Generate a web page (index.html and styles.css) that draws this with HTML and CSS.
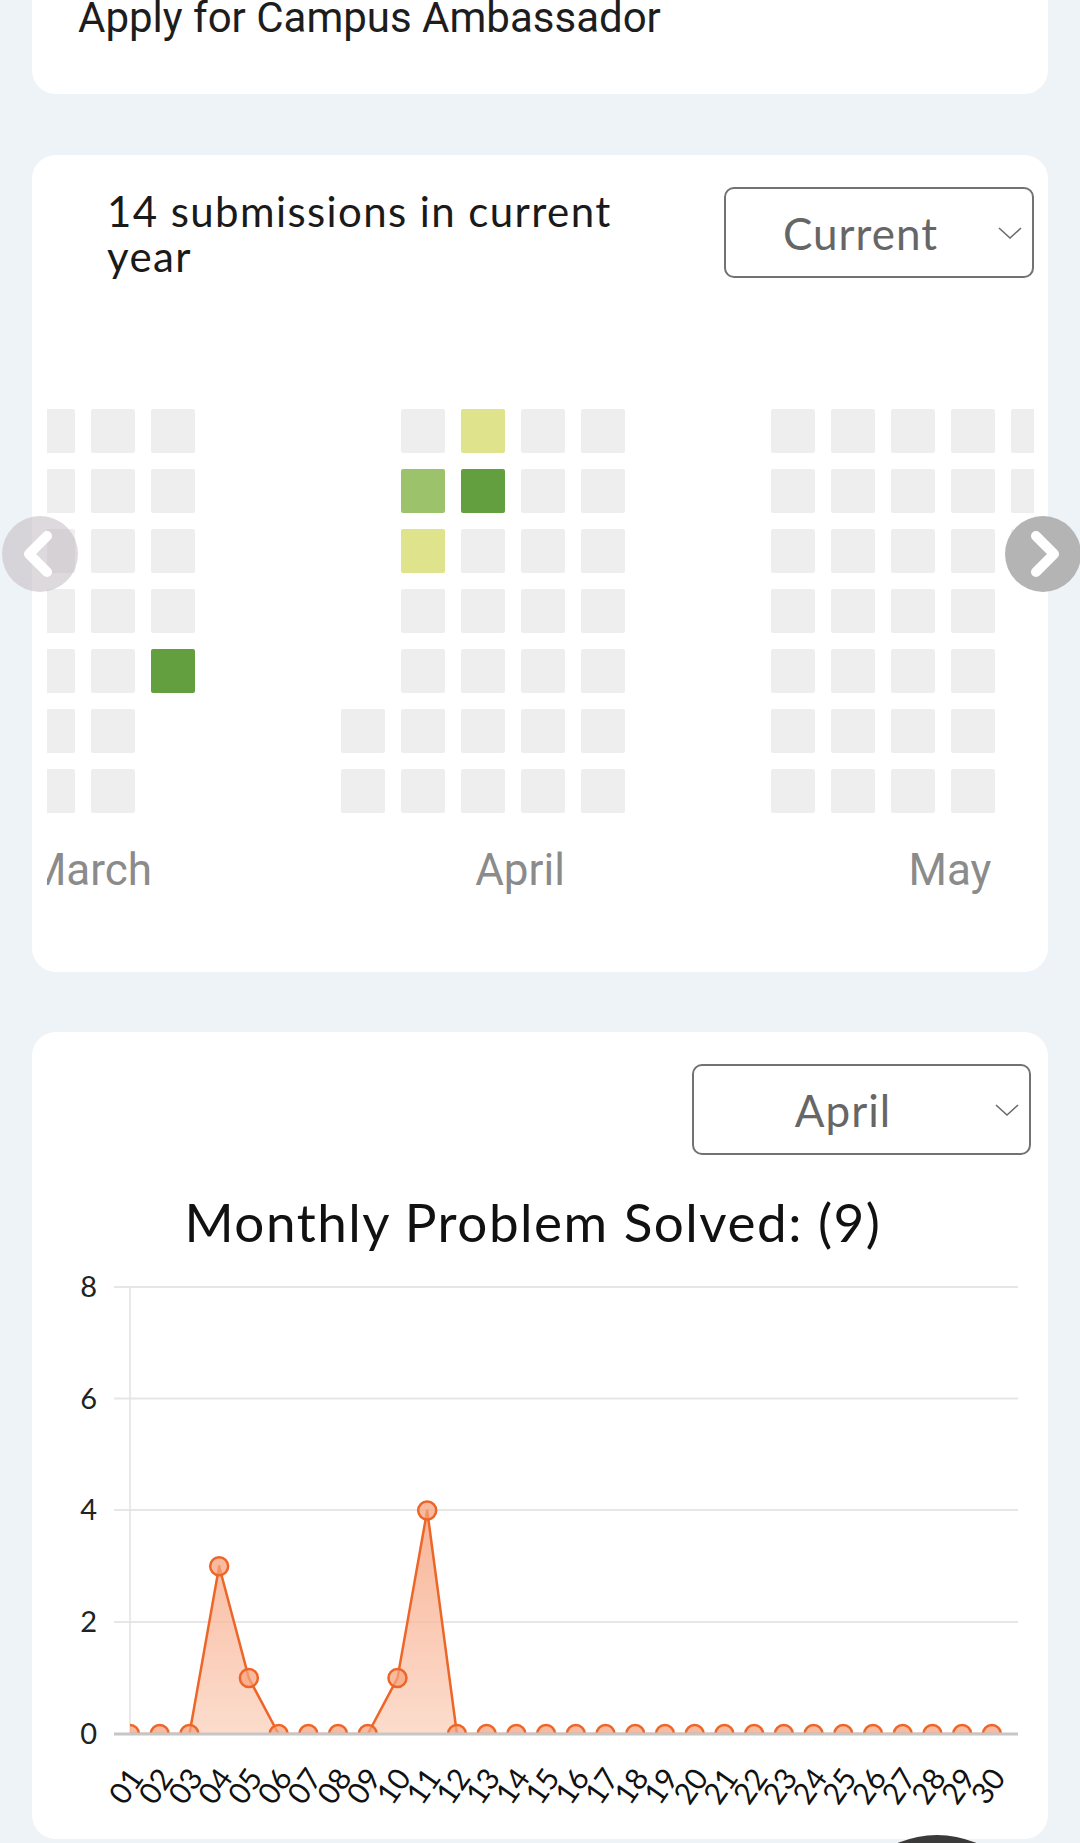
FILE: index.html
```html
<!DOCTYPE html>
<html lang="en">
<head>
<meta charset="utf-8">
<title>Profile stats</title>
<link rel="stylesheet" href="styles.css">
</head>
<body>
<div class="page">

  <section class="card card-apply">
    <div class="apply-text">Apply for Campus Ambassador</div>
  </section>

  <section class="card card-heat">
    <div class="heat-header">
      <div class="heat-title">14 submissions in current year</div>
      <div class="select select-year">
        <span class="select-label">Current</span>
        <svg class="chev" viewBox="0 0 26 14" width="26" height="14"><path d="M2 2 L13 12 L24 2" /></svg>
      </div>
    </div>

    <div class="heat-viewport">
      <div class="heat-track">
        <div class="month">
          <div class="month-grid">
            <span class="c e"></span><span class="c e"></span>
            <span class="c"></span><span class="c"></span><span class="c"></span><span class="c"></span><span class="c"></span>
            <span class="c"></span><span class="c"></span><span class="c"></span><span class="c"></span><span class="c"></span><span class="c"></span><span class="c"></span>
            <span class="c"></span><span class="c"></span><span class="c"></span><span class="c"></span><span class="c"></span><span class="c"></span><span class="c"></span>
            <span class="c"></span><span class="c"></span><span class="c"></span><span class="c"></span><span class="c"></span><span class="c"></span><span class="c"></span>
            <span class="c"></span><span class="c"></span><span class="c"></span><span class="c"></span><span class="c l3"></span>
          </div>
          <div class="month-label">March</div>
        </div>
        <div class="month">
          <div class="month-grid">
            <span class="c e"></span><span class="c e"></span><span class="c e"></span><span class="c e"></span><span class="c e"></span>
            <span class="c"></span><span class="c"></span>
            <span class="c"></span><span class="c l2"></span><span class="c l1"></span><span class="c"></span><span class="c"></span><span class="c"></span><span class="c"></span>
            <span class="c l1"></span><span class="c l3"></span><span class="c"></span><span class="c"></span><span class="c"></span><span class="c"></span><span class="c"></span>
            <span class="c"></span><span class="c"></span><span class="c"></span><span class="c"></span><span class="c"></span><span class="c"></span><span class="c"></span>
            <span class="c"></span><span class="c"></span><span class="c"></span><span class="c"></span><span class="c"></span><span class="c"></span><span class="c"></span>
          </div>
          <div class="month-label">April</div>
        </div>
        <div class="month">
          <div class="month-grid">
            <span class="c"></span><span class="c"></span><span class="c"></span><span class="c"></span><span class="c"></span><span class="c"></span><span class="c"></span>
            <span class="c"></span><span class="c"></span><span class="c"></span><span class="c"></span><span class="c"></span><span class="c"></span><span class="c"></span>
            <span class="c"></span><span class="c"></span><span class="c"></span><span class="c"></span><span class="c"></span><span class="c"></span><span class="c"></span>
            <span class="c"></span><span class="c"></span><span class="c"></span><span class="c"></span><span class="c"></span><span class="c"></span><span class="c"></span>
            <span class="c"></span><span class="c"></span><span class="c"></span>
          </div>
          <div class="month-label">May</div>
        </div>
      </div>
    </div>

    <button class="nav nav-prev" aria-label="Previous">
      <svg viewBox="0 0 76 76" width="76" height="76"><path d="M45 20 L27 38 L45 56" /></svg>
    </button>
    <button class="nav nav-next" aria-label="Next">
      <svg viewBox="0 0 76 76" width="76" height="76"><path d="M31 20 L49 38 L31 56" /></svg>
    </button>
  </section>

  <section class="card card-chart">
    <div class="chart-head">
      <div class="select select-month">
        <span class="select-label">April</span>
        <svg class="chev" viewBox="0 0 26 14" width="26" height="14"><path d="M2 2 L13 12 L24 2" /></svg>
      </div>
    </div>
    <div class="chart-title">Monthly Problem Solved: (9)</div>

    <svg class="chart" viewBox="32 1253 1016 585" width="1016" height="585">
      <defs>
        <linearGradient id="fillGrad" gradientUnits="userSpaceOnUse" x1="0" y1="1509" x2="0" y2="1733">
          <stop offset="0" stop-color="#f6a27d" stop-opacity="0.8"/>
          <stop offset="1" stop-color="#fbcdb7" stop-opacity="0.7"/>
        </linearGradient>
        <clipPath id="area">
          <rect x="130" y="1260" width="890" height="473"/>
        </clipPath>
      </defs>

      <g class="grid">
        <line x1="114" y1="1286" x2="1018" y2="1286"/>
        <line x1="114" y1="1397.5" x2="1018" y2="1397.5"/>
        <line x1="114" y1="1509" x2="1018" y2="1509"/>
        <line x1="114" y1="1621" x2="1018" y2="1621"/>
        <line class="yaxis" x1="130" y1="1286" x2="130" y2="1733"/>
      </g>

      <g class="ylabels">
        <text x="97" y="1296">8</text>
        <text x="97" y="1407.5">6</text>
        <text x="97" y="1519">4</text>
        <text x="97" y="1631">2</text>
        <text x="97" y="1743">0</text>
      </g>

      <g clip-path="url(#area)">
        <path class="area" d="M130 1733 L159.72 1733 L189.44 1733 L219.16 1565.3 L248.88 1677.1 L278.6 1733 L308.32 1733 L338.04 1733 L367.76 1733 L397.48 1677.1 L427.2 1509.4 L456.92 1733 L991.88 1733 Z"/>
        <path class="line" d="M130 1733 L159.72 1733 L189.44 1733 L219.16 1565.3 L248.88 1677.1 L278.6 1733 L308.32 1733 L338.04 1733 L367.76 1733 L397.48 1677.1 L427.2 1509.4 L456.92 1733 L991.88 1733"/>
        <g class="pts">
          <circle cx="130" cy="1733" r="9"/>
          <circle cx="159.72" cy="1733" r="9"/>
          <circle cx="189.44" cy="1733" r="9"/>
          <circle cx="219.16" cy="1565.3" r="9"/>
          <circle cx="248.88" cy="1677.1" r="9"/>
          <circle cx="278.6" cy="1733" r="9"/>
          <circle cx="308.32" cy="1733" r="9"/>
          <circle cx="338.04" cy="1733" r="9"/>
          <circle cx="367.76" cy="1733" r="9"/>
          <circle cx="397.48" cy="1677.1" r="9"/>
          <circle cx="427.2" cy="1509.4" r="9"/>
          <circle cx="456.92" cy="1733" r="9"/>
          <circle cx="486.64" cy="1733" r="9"/>
          <circle cx="516.36" cy="1733" r="9"/>
          <circle cx="546.08" cy="1733" r="9"/>
          <circle cx="575.8" cy="1733" r="9"/>
          <circle cx="605.52" cy="1733" r="9"/>
          <circle cx="635.24" cy="1733" r="9"/>
          <circle cx="664.96" cy="1733" r="9"/>
          <circle cx="694.68" cy="1733" r="9"/>
          <circle cx="724.4" cy="1733" r="9"/>
          <circle cx="754.12" cy="1733" r="9"/>
          <circle cx="783.84" cy="1733" r="9"/>
          <circle cx="813.56" cy="1733" r="9"/>
          <circle cx="843.28" cy="1733" r="9"/>
          <circle cx="873" cy="1733" r="9"/>
          <circle cx="902.72" cy="1733" r="9"/>
          <circle cx="932.44" cy="1733" r="9"/>
          <circle cx="962.16" cy="1733" r="9"/>
          <circle cx="991.88" cy="1733" r="9"/>
        </g>
      </g>

      <line class="zero" x1="114" y1="1733" x2="1018" y2="1733"/>

      <g class="xlabels">
        <text transform="translate(135 1770) rotate(-55)">01</text>
        <text transform="translate(164.72 1770) rotate(-55)">02</text>
        <text transform="translate(194.44 1770) rotate(-55)">03</text>
        <text transform="translate(224.16 1770) rotate(-55)">04</text>
        <text transform="translate(253.88 1770) rotate(-55)">05</text>
        <text transform="translate(283.6 1770) rotate(-55)">06</text>
        <text transform="translate(313.32 1770) rotate(-55)">07</text>
        <text transform="translate(343.04 1770) rotate(-55)">08</text>
        <text transform="translate(372.76 1770) rotate(-55)">09</text>
        <text transform="translate(402.48 1770) rotate(-55)">10</text>
        <text transform="translate(432.2 1770) rotate(-55)">11</text>
        <text transform="translate(461.92 1770) rotate(-55)">12</text>
        <text transform="translate(491.64 1770) rotate(-55)">13</text>
        <text transform="translate(521.36 1770) rotate(-55)">14</text>
        <text transform="translate(551.08 1770) rotate(-55)">15</text>
        <text transform="translate(580.8 1770) rotate(-55)">16</text>
        <text transform="translate(610.52 1770) rotate(-55)">17</text>
        <text transform="translate(640.24 1770) rotate(-55)">18</text>
        <text transform="translate(669.96 1770) rotate(-55)">19</text>
        <text transform="translate(699.68 1770) rotate(-55)">20</text>
        <text transform="translate(729.4 1770) rotate(-55)">21</text>
        <text transform="translate(759.12 1770) rotate(-55)">22</text>
        <text transform="translate(788.84 1770) rotate(-55)">23</text>
        <text transform="translate(818.56 1770) rotate(-55)">24</text>
        <text transform="translate(848.28 1770) rotate(-55)">25</text>
        <text transform="translate(878 1770) rotate(-55)">26</text>
        <text transform="translate(907.72 1770) rotate(-55)">27</text>
        <text transform="translate(937.44 1770) rotate(-55)">28</text>
        <text transform="translate(967.16 1770) rotate(-55)">29</text>
        <text transform="translate(996.88 1770) rotate(-55)">30</text>
      </g>
    </svg>
  </section>

  <div class="fab"></div>
</div>
</body>
</html>
```

FILE: styles.css
```css
html, body {
  margin: 0;
  padding: 0;
}

body {
  background: #eef3f8;
  font-family: Lato, "Noto Sans", sans-serif;
  color: #1a1a1a;
  overflow: hidden;
}

.page {
  position: relative;
  height: 1843px;
  padding: 0 32px;
  overflow: hidden;
}

.card {
  background: #ffffff;
  border-radius: 24px;
}

/* Card 1 */
.card-apply {
  display: flow-root;
  height: 94px;
  box-sizing: border-box;
  border-radius: 0 0 24px 24px;
  padding-left: 46px;
  margin-bottom: 61px;
}

.apply-text {
  margin-top: -6px;
  font-family: Roboto, "Liberation Sans", sans-serif;
  font-size: 42px;
  line-height: 48px;
  color: #1d1d1d;
}

/* Card 2: heatmap */
.card-heat {
  position: relative;
  padding: 32px 14px 76px 15px;
  margin-bottom: 60px;
}

.heat-header {
  display: flex;
  justify-content: space-between;
  align-items: flex-start;
}

.heat-title {
  width: 520px;
  margin: 2px 0 0 60px;
  font-size: 42px;
  line-height: 45px;
  letter-spacing: 1.4px;
  color: #1a1a1a;
}

.select {
  box-sizing: border-box;
  height: 91px;
  border: 2.5px solid #727272;
  border-radius: 10px;
  display: flex;
  align-items: center;
  gap: 2px;
  padding-right: 9px;
  color: #666666;
  font-size: 44px;
  letter-spacing: 1px;
}

.select-year {
  width: 310px;
}

.select-month {
  width: 339px;
}

.select-label {
  flex: 1;
  text-align: center;
}

.chev {
  flex: 0 0 26px;
}

.chev path {
  fill: none;
  stroke: #6a6a6a;
  stroke-width: 1.6;
}

.heat-viewport {
  margin-top: 130px;
  overflow: hidden;
}

.heat-track {
  display: flex;
  margin-left: -172px;
}

.month {
  flex: 0 0 430px;
  display: flex;
  flex-direction: column;
}

.month-grid {
  display: grid;
  grid-template-rows: repeat(7, 44px);
  grid-auto-flow: column;
  grid-auto-columns: 44px;
  gap: 16px;
  padding-left: 36px;
}

.c {
  background: #eeeeee;
  border-radius: 2px;
}

.c.e {
  background: transparent;
}

.c.l1 { background: #dfe48c; }
.c.l2 { background: #9cc36b; }
.c.l3 { background: #649f3f; }

.month-label {
  margin-top: 31px;
  text-align: center;
  font-family: Roboto, "Liberation Sans", sans-serif;
  font-size: 44px;
  line-height: 52px;
  color: #8b8b8b;
}

.nav {
  position: absolute;
  top: 361px;
  width: 76px;
  height: 76px;
  padding: 0;
  border: 0;
  border-radius: 50%;
  display: flex;
  align-items: center;
  justify-content: center;
}

.nav svg path {
  fill: none;
  stroke: #ffffff;
  stroke-width: 10;
  stroke-linecap: round;
  stroke-linejoin: round;
}

.nav-prev {
  left: -30px;
  background: rgba(190, 180, 185, 0.5);
}

.nav-next {
  right: -33px;
  background: #b4b4b4;
}

/* Card 3: chart */
.card-chart {
  box-sizing: border-box;
  height: 807px;
  padding-top: 32px;
  overflow: hidden;
}

.chart-head {
  display: flex;
  justify-content: flex-end;
  padding-right: 17px;
}

.chart-title {
  margin-top: 35px;
  padding-right: 14px;
  text-align: center;
  font-size: 53px;
  line-height: 64px;
  letter-spacing: 1.5px;
  color: #111111;
}

.chart {
  display: block;
}

.grid line {
  stroke: #e6e6e6;
  stroke-width: 2;
}

.grid line.yaxis {
  stroke: #e2e2e2;
  stroke-width: 1.5;
}

.zero {
  stroke: #c6c6c6;
  stroke-width: 3;
}

.ylabels text {
  font-family: Lato, "Noto Sans", sans-serif;
  font-size: 29px;
  fill: #222222;
  text-anchor: end;
}

.area {
  fill: url(#fillGrad);
  stroke: none;
}

.line {
  fill: none;
  stroke: #ee6528;
  stroke-width: 2.5;
  stroke-linejoin: round;
}

.pts circle {
  fill: rgba(247, 164, 127, 0.75);
  stroke: #ee6528;
  stroke-width: 2.5;
}

.xlabels text {
  font-family: Lato, "Noto Sans", sans-serif;
  font-size: 30px;
  fill: #111111;
  text-anchor: end;
  dominant-baseline: central;
}

.fab {
  position: absolute;
  left: 837px;
  top: 1835px;
  width: 200px;
  height: 200px;
  border-radius: 50%;
  background: #3a3a3a;
}
```
